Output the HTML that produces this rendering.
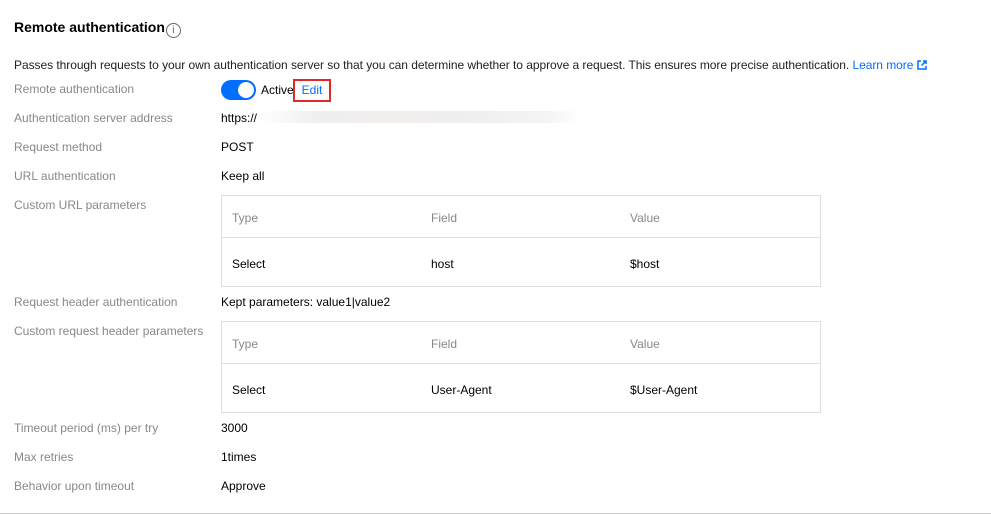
<!DOCTYPE html>
<html><head><style>
body{margin:0;width:991px;height:515px;background:#fff;font-family:"Liberation Sans",sans-serif;font-size:12px;color:#000;position:relative;overflow:hidden}
.a{position:absolute;white-space:nowrap}
.l{color:#888;left:14px}
.v{left:221px;color:#000}
table{position:absolute;left:221px;width:600px;border-collapse:collapse;border:1px solid #dcdfe6}
td{padding:3px 0 0 10px;height:38px;border-top:1px solid #dcdfe6}
tr.h td{color:#888;border-top:none}
tr.b td{height:45px}
</style></head><body>
<div class="a" style="left:14px;top:19px;font-size:14px;font-weight:bold">Remote authentication<span style="display:inline-block;width:13px;height:13px;border:1px solid #666;border-radius:50%;font-size:10px;font-weight:normal;text-align:center;line-height:13px;vertical-align:-1px;margin-left:1px;color:#555">i</span></div>
<div class="a" style="left:14px;top:58px;color:#222;letter-spacing:-0.05px">Passes through requests to your own authentication server so that you can determine whether to approve a request. This ensures more precise authentication. <span style="color:#006eff">Learn more</span> <svg width="10" height="10" viewBox="0 0 10 10" style="vertical-align:-1px"><path d="M4 1H1v8h8V6M6 1h3v3M9 1L4.5 5.5" stroke="#006eff" stroke-width="1.5" fill="none"/></svg></div>
<div class="a l" style="top:82px">Remote authentication</div>
<div class="a" style="left:221px;top:80px;width:35px;height:20px;background:#006eff;border-radius:10px"><div style="position:absolute;right:2px;top:2px;width:16px;height:16px;background:#fff;border-radius:50%"></div></div>
<div class="a" style="left:261px;top:83px">Active</div>
<div class="a" style="left:293px;top:79px;width:34px;height:19px;border:2px solid #e02a2a;color:#006eff;line-height:19px;text-align:center">Edit</div>
<div class="a l" style="top:111px">Authentication server address</div>
<div class="a v" style="top:111px">https://</div>
<div class="a" style="left:258px;top:111px;width:322px;height:12px;background:linear-gradient(90deg,#fff,#eee 20%,#f3eeee 40%,#eee 60%,#f4f4f4 90%,#fff)"></div>
<div class="a l" style="top:140px">Request method</div><div class="a v" style="top:140px">POST</div>
<div class="a l" style="top:169px">URL authentication</div><div class="a v" style="top:169px">Keep all</div>
<div class="a l" style="top:198px">Custom URL parameters</div>
<table style="top:195px"><tr class="h"><td style="width:189px">Type</td><td style="width:189px">Field</td><td>Value</td></tr><tr class="b"><td>Select</td><td>host</td><td>$host</td></tr></table>
<div class="a l" style="top:295px">Request header authentication</div><div class="a v" style="top:295px">Kept parameters: value1|value2</div>
<div class="a l" style="top:324px">Custom request header parameters</div>
<table style="top:321px"><tr class="h"><td style="width:189px">Type</td><td style="width:189px">Field</td><td>Value</td></tr><tr class="b"><td>Select</td><td>User-Agent</td><td>$User-Agent</td></tr></table>
<div class="a l" style="top:421px">Timeout period (ms) per try</div><div class="a v" style="top:421px">3000</div>
<div class="a l" style="top:450px">Max retries</div><div class="a v" style="top:450px">1times</div>
<div class="a l" style="top:479px">Behavior upon timeout</div><div class="a v" style="top:479px">Approve</div>
<div class="a" style="left:0;top:513px;width:991px;height:1px;background:#ccc"></div>
</body></html>
